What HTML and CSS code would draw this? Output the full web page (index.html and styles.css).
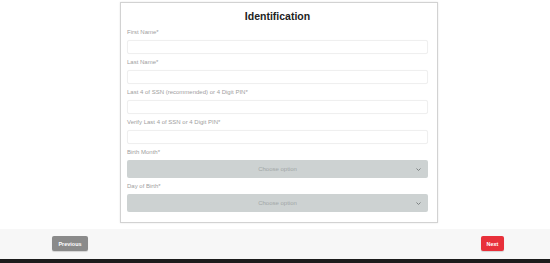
FILE: index.html
```html
<!DOCTYPE html>
<html>
<head>
<meta charset="utf-8">
<link rel="stylesheet" href="styles.css">
</head>
<body>
<div class="page">
  <main class="wrap">
    <form class="card">
      <h1 class="title">Identification</h1>
      <div class="field">
        <label class="label">First Name*</label>
        <input class="input" type="text">
      </div>
      <div class="field">
        <label class="label">Last Name*</label>
        <input class="input" type="text">
      </div>
      <div class="field">
        <label class="label">Last 4 of SSN (recommended) or 4 Digit PIN*</label>
        <input class="input" type="text">
      </div>
      <div class="field">
        <label class="label">Verify Last 4 of SSN or 4 Digit PIN*</label>
        <input class="input" type="text">
      </div>
      <div class="field">
        <label class="label">Birth Month*</label>
        <div class="select">
          <span class="select-text">Choose option</span>
          <svg class="chev" width="5" height="3" viewBox="0 0 5 3"><path d="M0.5 0.5 L2.5 2.5 L4.5 0.5" fill="none" stroke="#7d8283" stroke-width="1"/></svg>
        </div>
      </div>
      <div class="field last">
        <label class="label">Day of Birth*</label>
        <div class="select">
          <span class="select-text">Choose option</span>
          <svg class="chev" width="5" height="3" viewBox="0 0 5 3"><path d="M0.5 0.5 L2.5 2.5 L4.5 0.5" fill="none" stroke="#7d8283" stroke-width="1"/></svg>
        </div>
      </div>
    </form>
  </main>
  <footer class="footer">
    <button class="btn btn-prev" type="button">Previous</button>
    <button class="btn btn-next" type="button">Next</button>
  </footer>
  <div class="bottom-bar"></div>
</div>
</body>
</html>
```
FILE: styles.css
```css
html, body {
  margin: 0;
  padding: 0;
  background: #ffffff;
  font-family: "Liberation Sans", Arial, sans-serif;
}
.page {
  width: 550px;
  height: 263px;
  display: flex;
  flex-direction: column;
  overflow: hidden;
}
.wrap {
  display: flex;
  justify-content: center;
  padding: 2px 0 0 8px;
}
.card {
  box-sizing: border-box;
  width: 318px;
  height: 221px;
  border: 1px solid #d2d2d2;
  box-shadow: 0 0 2px rgba(0,0,0,0.1);
  padding: 7px 9px 0 6px;
  margin: 0;
  background: #fff;
}
.title {
  margin: 0 0 6px 0;
  text-align: center;
  font-size: 10.5px;
  line-height: 12px;
  font-weight: bold;
  color: #222;
}
.field {
  display: flex;
  flex-direction: column;
  margin-bottom: 4px;
}
.label {
  font-size: 6px;
  line-height: 8px;
  color: #a0a0a0;
  margin-bottom: 4px;
}
.input {
  box-sizing: border-box;
  height: 14px;
  width: 100%;
  margin: 0;
  border: 1px solid #efefef;
  border-radius: 2px;
  background: #fff;
  padding: 0 4px;
  box-shadow: 0 0 1px rgba(0,0,0,0.04);
}
.select {
  box-sizing: border-box;
  height: 18px;
  background: #cdd2d2;
  border-radius: 2px;
  display: flex;
  align-items: center;
  justify-content: center;
  position: relative;
}
.select-text {
  font-size: 6px;
  color: #a2a7a7;
}
.chev {
  position: absolute;
  right: 7px;
  top: 8px;
}
.footer {
  margin-top: 6px;
  height: 30px;
  box-sizing: border-box;
  background: #f7f7f7;
  display: flex;
  justify-content: space-between;
  align-items: flex-start;
  padding: 7px 46px 0 52px;
}
.btn {
  height: 15px;
  border: none;
  border-radius: 2px;
  color: #fff;
  font-family: "Liberation Sans", Arial, sans-serif;
  font-size: 5.5px;
  font-weight: bold;
  padding: 0;
  box-shadow: 0 1px 1px rgba(0,0,0,0.15);
}
.btn-prev {
  width: 36px;
  background: #8a8a8a;
}
.btn-next {
  width: 23px;
  background: #e8303a;
}
.bottom-bar {
  height: 4px;
  background: #1c1c1c;
}
```
